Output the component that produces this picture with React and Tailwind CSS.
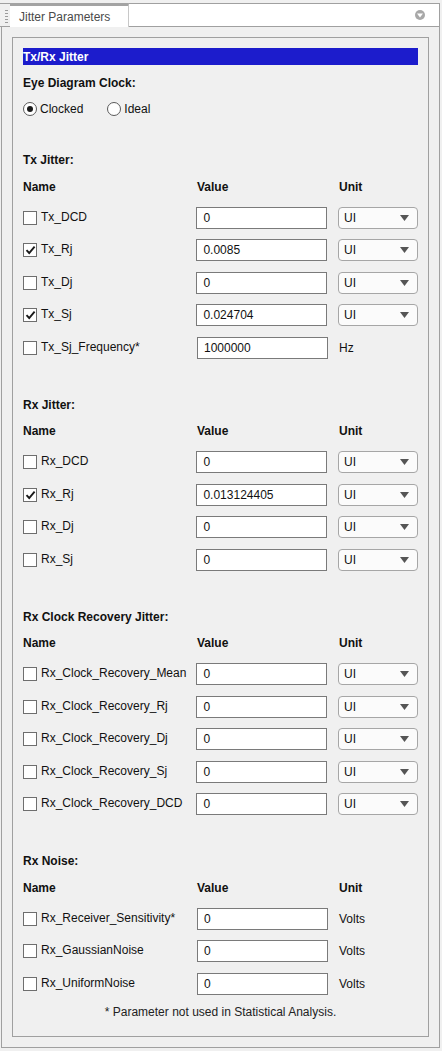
import React from "react";

function Check({ checked }) {
  return (
    <div className="w-[14px] h-[14px] border border-[#6e6e6e] bg-white flex items-center justify-center shrink-0">
      {checked && (
        <svg width="11" height="10" viewBox="0 0 11 10">
          <path d="M1.5 5.2 L4.2 8 L9.6 1.6" fill="none" stroke="#1a1a1a" strokeWidth="1.9" />
        </svg>
      )}
    </div>
  );
}

function Radio({ checked }) {
  return (
    <div className="w-[14px] h-[14px] rounded-full border border-[#5a5a5a] bg-white flex items-center justify-center shrink-0">
      {checked && <div className="w-[6px] h-[6px] rounded-full bg-[#1a1a1a]" />}
    </div>
  );
}

function Dropdown() {
  return (
    <div className="w-[80px] h-[22px] rounded-[4px] border border-[#a6a6a6] bg-[#fbfbfb] flex items-center justify-between pl-[5px] pr-[8px]">
      <span>UI</span>
      <svg width="9" height="6" viewBox="0 0 9 6">
        <path d="M0 0 H9 L4.5 6 Z" fill="#555555" />
      </svg>
    </div>
  );
}

function Row({ name, value, checked, unit }) {
  return (
    <div className="h-[32.5px] flex items-center">
      <div className="w-[174px] flex items-center">
        <Check checked={checked} />
        <span className="ml-[4px] mb-[2px]">{name}</span>
      </div>
      <div className="w-[131px] h-[22px] border border-[#7a7a7a] bg-white flex items-center pl-[6px]">
        {value}
      </div>
      <div className="ml-[11px] flex items-center">
        {unit === "UI" ? <Dropdown /> : <span>{unit}</span>}
      </div>
    </div>
  );
}

function Section({ title, rows, first }) {
  return (
    <div className={first ? "mt-[33px]" : "mt-[31.75px]"}>
      <div className="h-[18px] flex items-center font-bold">{title}</div>
      <div className="mt-[8.75px] h-[18px] flex items-center font-bold">
        <div className="w-[174px]">Name</div>
        <div className="w-[142px]">Value</div>
        <div>Unit</div>
      </div>
      <div className="mt-[5.5px]">
        {rows.map((r) => (
          <Row key={r[0]} name={r[0]} value={r[1]} checked={r[2]} unit={r[3]} />
        ))}
      </div>
    </div>
  );
}

export default function App() {
  const tx = [
    ["Tx_DCD", "0", false, "UI"],
    ["Tx_Rj", "0.0085", true, "UI"],
    ["Tx_Dj", "0", false, "UI"],
    ["Tx_Sj", "0.024704", true, "UI"],
    ["Tx_Sj_Frequency*", "1000000", false, "Hz"],
  ];
  const rx = [
    ["Rx_DCD", "0", false, "UI"],
    ["Rx_Rj", "0.013124405", true, "UI"],
    ["Rx_Dj", "0", false, "UI"],
    ["Rx_Sj", "0", false, "UI"],
  ];
  const cr = [
    ["Rx_Clock_Recovery_Mean", "0", false, "UI"],
    ["Rx_Clock_Recovery_Rj", "0", false, "UI"],
    ["Rx_Clock_Recovery_Dj", "0", false, "UI"],
    ["Rx_Clock_Recovery_Sj", "0", false, "UI"],
    ["Rx_Clock_Recovery_DCD", "0", false, "UI"],
  ];
  const noise = [
    ["Rx_Receiver_Sensitivity*", "0", false, "Volts"],
    ["Rx_GaussianNoise", "0", false, "Volts"],
    ["Rx_UniformNoise", "0", false, "Volts"],
  ];
  return (
    <div className="w-[442px] h-[1051px] bg-[#f0f0f0] text-[12px] text-[#111111] font-['Liberation_Sans',Arial,sans-serif] overflow-hidden">
      <div className="h-[3px]" />
      {/* header strip */}
      <div className="flex h-[24px] w-[440px]">
        <div className="w-[10px] border-t border-b border-[#a0a0a0] flex items-start justify-center pt-[6px]">
          <div className="flex flex-col gap-[2px] ml-[2px]">
            <div className="w-[3px] h-[1px] bg-[#9a9a9a]" />
            <div className="w-[3px] h-[1px] bg-[#9a9a9a]" />
            <div className="w-[3px] h-[1px] bg-[#9a9a9a]" />
            <div className="w-[3px] h-[1px] bg-[#9a9a9a]" />
            <div className="w-[3px] h-[1px] bg-[#9a9a9a]" />
          </div>
        </div>
        <div className="w-[119px] bg-white border-t-[3px] border-[#a3a3a3] border-r border-r-[#c8c8c8] flex items-center pl-[9px] text-[#4a4a4a]">
          Jitter Parameters
        </div>
        <div className="flex-1 bg-white border-t border-b border-r border-[#a0a0a0] flex items-center justify-end pr-[14px]">
          <div className="w-[10px] h-[10px] rounded-full bg-[#a8a8a8] flex items-center justify-center">
            <svg width="6" height="5" viewBox="0 0 6 5">
              <path d="M0 0.5 H6 L3 4.5 Z" fill="#ffffff" />
            </svg>
          </div>
        </div>
      </div>
      {/* outer body */}
      <div className="w-[439px] ml-[1px] h-[1021px] border-l border-r border-b border-[#a0a0a0] px-[10px] pt-[10px] pb-[10px]">
        <div className="h-full border border-[#a0a0a0] px-[10px] pt-[10px]">
          <div className="h-[17px] bg-[#1c1ccc] text-white font-bold flex items-center">
            Tx/Rx Jitter
          </div>
          <div className="mt-[9px] h-[18px] flex items-center font-bold">Eye Diagram Clock:</div>
          <div className="mt-[8px] h-[18px] flex items-center">
            <Radio checked />
            <span className="ml-[3px]">Clocked</span>
            <div className="ml-[24px]">
              <Radio />
            </div>
            <span className="ml-[3px]">Ideal</span>
          </div>
          <Section title="Tx Jitter:" rows={tx} first />
          <Section title="Rx Jitter:" rows={rx} />
          <Section title="Rx Clock Recovery Jitter:" rows={cr} />
          <Section title="Rx Noise:" rows={noise} />
          <div className="mt-[3.5px] h-[18px] flex items-center justify-center text-[#222222]">
            * Parameter not used in Statistical Analysis.
          </div>
        </div>
      </div>
    </div>
  );
}
